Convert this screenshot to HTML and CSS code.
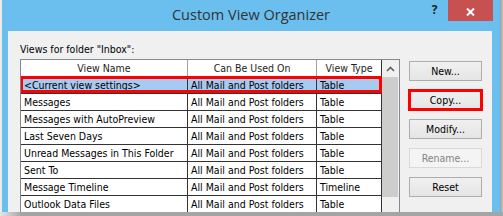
FILE: index.html
```html
<!DOCTYPE html>
<html lang="en">
<head>
  <meta charset="utf-8">
  <title>Custom View Organizer</title>
  <link rel="stylesheet" href="styles.css">
</head>
<body>
  <div class="screen">
    <div class="edge"></div>
    <div class="window">
      <div class="titlebar">
        <div></div>
        <div class="title">Custom View Organizer</div>
        <div class="controls">
          <span class="help">?</span>
          <span class="close">
            <svg width="9" height="8" viewBox="0 0 9 8">
              <path d="M1 0.5 L8 7.5 M8 0.5 L1 7.5" stroke="#fff" stroke-width="2" fill="none"/>
            </svg>
          </span>
        </div>
      </div>

      <div class="client">
        <div class="main">
          <div class="label">Views for folder "Inbox":</div>
          <div class="listview">
            <div class="grid">
              <div class="row head">
                <div class="cell c1">View Name</div>
                <div class="cell c2">Can Be Used On</div>
                <div class="cell c3">View Type</div>
              </div>
              <div class="row selected">
                <div class="cell c1">&lt;Current view settings&gt;</div>
                <div class="cell c2">All Mail and Post folders</div>
                <div class="cell c3">Table</div>
              </div>
              <div class="row">
                <div class="cell c1">Messages</div>
                <div class="cell c2">All Mail and Post folders</div>
                <div class="cell c3">Table</div>
              </div>
              <div class="row">
                <div class="cell c1">Messages with AutoPreview</div>
                <div class="cell c2">All Mail and Post folders</div>
                <div class="cell c3">Table</div>
              </div>
              <div class="row">
                <div class="cell c1">Last Seven Days</div>
                <div class="cell c2">All Mail and Post folders</div>
                <div class="cell c3">Table</div>
              </div>
              <div class="row">
                <div class="cell c1">Unread Messages in This Folder</div>
                <div class="cell c2">All Mail and Post folders</div>
                <div class="cell c3">Table</div>
              </div>
              <div class="row">
                <div class="cell c1">Sent To</div>
                <div class="cell c2">All Mail and Post folders</div>
                <div class="cell c3">Table</div>
              </div>
              <div class="row">
                <div class="cell c1">Message Timeline</div>
                <div class="cell c2">All Mail and Post folders</div>
                <div class="cell c3">Timeline</div>
              </div>
              <div class="row">
                <div class="cell c1">Outlook Data Files</div>
                <div class="cell c2">All Mail and Post folders</div>
                <div class="cell c3">Table</div>
              </div>
            </div>
            <div class="scrollbar">
              <div class="arrow">
                <svg width="9" height="6" viewBox="0 0 9 6">
                  <polyline points="1,5 4.5,1.5 8,5" stroke="#606060" stroke-width="1.6" fill="none"/>
                </svg>
              </div>
              <div class="thumb"></div>
            </div>
          </div>
        </div>

        <div class="buttons">
          <button class="btn">New...</button>
          <button class="btn marked">Copy...</button>
          <button class="btn">Modify...</button>
          <button class="btn" disabled>Rename...</button>
          <button class="btn">Reset</button>
        </div>
      </div>
    </div>
    <div class="shade-right"></div>
  </div>
  <div class="shade-bottom"></div>
</body>
</html>
```

FILE: styles.css
```css
body {
  margin: 0;
  width: 503px;
  height: 216px;
  overflow: hidden;
  background: #a8a8a8;
  font-family: "DejaVu Sans Condensed", "DejaVu Sans", sans-serif;
  font-size: 10.5px;
  color: #000;
}

.screen {
  display: flex;
  height: 212px;
}

.edge {
  width: 2px;
  background: #ebebeb;
}

.window {
  width: 498px;
  background: #6abfee;
  display: flex;
  flex-direction: column;
}

.shade-right {
  width: 3px;
  background: linear-gradient(to right, #9c9c9c, #c4c4c4);
}

.shade-bottom {
  height: 4px;
  background: linear-gradient(to right, #e6e6e6 0, #a4a4a4 22px);
}

/* -------------- title bar -------------- */
.titlebar {
  height: 31px;
  display: grid;
  grid-template-columns: 1fr auto 1fr;
  align-items: start;
}

.title {
  font-family: "Open Sans", sans-serif;
  font-size: 14.5px;
  line-height: 19px;
  padding-top: 5px;
  color: #333;
  white-space: nowrap;
}

.controls {
  justify-self: end;
  display: flex;
  margin-right: 7px;
}

.help {
  width: 27px;
  padding-top: 2px;
  text-align: center;
  font-family: "Open Sans", sans-serif;
  font-weight: bold;
  font-size: 12px;
  line-height: 16px;
  color: #222;
}

.close {
  width: 45px;
  height: 21px;
  padding-top: 2px;
  box-sizing: border-box;
  background: #c75050;
  display: flex;
  align-items: center;
  justify-content: center;
}

/* -------------- client area -------------- */
.client {
  flex: 1;
  margin: 0 8px 0 6px;
  padding: 11px 0 0 12px;
  background: #f0f0f0;
  display: flex;
  align-items: flex-start;
}

.main {
  width: 380px;
}

.label {
  line-height: 14px;
  margin-bottom: 3px;
}

.listview {
  width: 380px;
  height: 153px;
  box-sizing: border-box;
  border: 1px solid #828790;
  border-bottom: 0;
  background: #fff;
  display: flex;
  overflow: hidden;
}

.grid {
  width: 361px;
}

.row {
  display: flex;
  height: 17px;
  box-sizing: border-box;
  border-bottom: 1px solid #333;
  position: relative;
}

.cell {
  padding: 0 3px;
  line-height: 16px;
  box-sizing: border-box;
  border-right: 1px solid #333;
  white-space: nowrap;
  overflow: hidden;
}

.c1 { width: 167px; }
.c2 { width: 129px; }
.c3 { width: 65px; }

.row.head .cell {
  text-align: center;
  color: #1e1e1e;
}
.row.head .c1,
.row.head .c2 {
  border-right-color: #a0a0a0;
}

.row.selected {
  background: #a6caf0;
}
/* red annotation box */
.row.selected::after {
  content: "";
  position: absolute;
  top: -1px;
  left: -1px;
  right: 0;
  bottom: 0;
  border: 3px solid #f00;
}

.scrollbar {
  width: 17px;
  background: #f0f0f0;
  display: flex;
  flex-direction: column;
}

.arrow {
  height: 17px;
  padding-top: 1px;
  box-sizing: border-box;
  display: flex;
  align-items: center;
  justify-content: center;
}

.thumb {
  height: 120px;
  margin-right: 1px;
  background: #cdcdcd;
}

/* -------------- buttons -------------- */
.buttons {
  display: flex;
  flex-direction: column;
  gap: 9px;
  margin: 19px 0 0 9px;
}

.btn {
  width: 73px;
  height: 20px;
  padding: 0;
  box-sizing: border-box;
  border: 1px solid #adadad;
  border-radius: 0;
  background: linear-gradient(#f0f0f0, #e5e5e5);
  font: inherit;
  line-height: 18px;
  color: #000;
  text-align: center;
}

.btn.marked {
  outline: 3px solid #f00;
  outline-offset: -2px;
}

.btn:disabled {
  color: #838383;
  border-color: #d9d9d9;
  background: #f4f4f4;
}
```
